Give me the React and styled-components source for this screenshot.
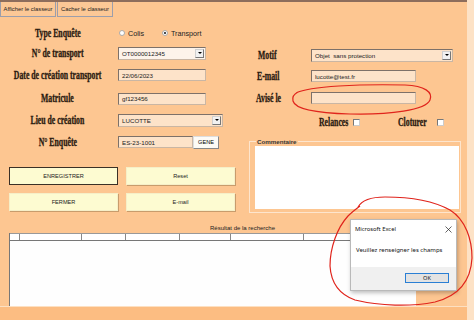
import React from 'react';
import styled, { createGlobalStyle } from 'styled-components';

const Global = createGlobalStyle`
  html, body { margin: 0; padding: 0; background: #fdc691; }
  * { box-sizing: border-box; }
`;

const Page = styled.div`
  position: relative;
  width: 474px;
  height: 320px;
  display: flex;
  overflow: hidden;
  font-family: "Liberation Sans", Arial, sans-serif;
`;

const Main = styled.div`
  width: 467px;
  display: flex;
  flex-direction: column;
  background: #fdc691;
`;

const Stripe = styled.div`
  flex: 1;
  background: #fde2c6;
`;

const TopBar = styled.div`
  height: 17px;
  border-top: 2px solid #8d6d5c;
  display: flex;
`;

const TabButton = styled.div`
  width: ${p => p.w}px;
  height: 15px;
  border: 1px solid #9c9eab;
  border-top: none;
  margin-right: 1px;
  background: #fcc896;
  font-size: 5.8px;
  color: #222;
  display: flex;
  align-items: center;
  justify-content: center;
  white-space: nowrap;
`;

const Body = styled.div`
  display: grid;
  grid-template-columns: 249px 218px;
  height: 195px;
`;

const LeftCol = styled.div`
  padding-top: 6px;
  display: flex;
  flex-direction: column;
`;

const RightCol = styled.div`
  padding-top: 27px;
  display: flex;
  flex-direction: column;
`;

const Row = styled.div`
  height: ${p => p.h}px;
  display: flex;
  align-items: center;
`;

const LabelCell = styled.div`
  width: ${p => p.w}px;
  margin-left: ${p => p.ml || 0}px;
  display: flex;
  justify-content: ${p => (p.left ? 'flex-start' : 'center')};
  flex-shrink: 0;
`;

const Label = styled.span`
  display: inline-block;
  font-family: "Liberation Serif", "Times New Roman", serif;
  font-weight: bold;
  font-size: 12.5px;
  color: #2a1a10;
  -webkit-text-stroke: 0.35px #2a1a10;
  white-space: nowrap;
  transform: scaleX(0.62);
  transform-origin: ${p => (p.left ? 'left center' : 'center')};
  margin-left: ${p => p.ml || 0}px;
`;

const FieldArea = styled.div`
  margin-left: 3px;
  display: flex;
  align-items: center;
  gap: ${p => p.gap || 0}px;
`;

const TextBox = styled.div`
  width: ${p => p.w}px;
  height: ${p => p.h || 12}px;
  background: ${p => p.bg || '#fde3c9'};
  border: 1px solid #c9b6a4;
  border-top-color: #7d7169;
  border-left-color: #7d7169;
  font-size: 6.2px;
  color: #222;
  display: flex;
  align-items: center;
  padding-left: 3px;
  white-space: nowrap;
`;

const SelectBox = styled(TextBox)`
  justify-content: space-between;
  padding-right: 1px;
`;

const DropBtn = styled.div`
  width: 9px;
  height: 9px;
  background: #f1f1f1;
  border: 1px solid #d0d0d0;
  border-right-color: #777;
  border-bottom-color: #777;
  display: flex;
  align-items: center;
  justify-content: center;
  &::after {
    content: '';
    border-left: 2px solid transparent;
    border-right: 2px solid transparent;
    border-top: 2.5px solid #000;
  }
`;

const SmallButton = styled.div`
  width: 26px;
  height: 13px;
  background: #fdfbf6;
  border: 1px solid #ddd;
  border-right-color: #888;
  border-bottom-color: #888;
  font-size: 5.6px;
  display: flex;
  align-items: center;
  justify-content: center;
`;

const RadioGroup = styled.div`
  display: flex;
  align-items: center;
  margin-left: 4px;
  gap: 18px;
`;

const RadioItem = styled.div`
  display: flex;
  align-items: center;
  gap: 3px;
  font-size: 7.2px;
  color: #222;
`;

const RadioDot = styled.span`
  width: 6px;
  height: 6px;
  border-radius: 50%;
  background: #fff;
  border: 1px solid #aaa;
  display: flex;
  align-items: center;
  justify-content: center;
  &::after {
    content: '';
    width: 2px;
    height: 2px;
    border-radius: 50%;
    background: ${p => (p.on ? '#111' : 'transparent')};
  }
`;

const CheckRow = styled.div`
  height: 24px;
  display: flex;
  align-items: center;
  padding-left: 70px;
`;

const CheckItem = styled.div`
  display: flex;
  align-items: center;
  width: ${p => p.w}px;
`;

const CheckBox = styled.span`
  width: 7px;
  height: 7px;
  background: #fff;
  border: 1px solid #ccc;
  border-top-color: #777;
  border-left-color: #777;
  margin-left: ${p => p.ml}px;
`;

const GroupBox = styled.fieldset`
  margin: 4px 0 0 0;
  padding: 1px 1px 2px 5px;
  width: 212px;
  height: 75px;
  border: 1px solid #fde5cd;
  & > legend {
    font-family: "Liberation Sans", Arial, sans-serif;
    font-weight: bold;
    font-size: 6.2px;
    color: #333;
    padding: 0 1px;
    margin-left: 1px;
  }
`;

const TextArea = styled.div`
  height: 63px;
  background: #fff;
`;

const ButtonGrid = styled.div`
  margin: 13px 0 0 9px;
  display: grid;
  grid-template-columns: 109px 109px;
  grid-auto-rows: 18px;
  column-gap: 8px;
  row-gap: 8px;
`;

const ActionButton = styled.div`
  background: #fdfbd1;
  border: 1px solid ${p => (p.focus ? '#3b3026' : '#f6efc8')};
  box-shadow: ${p => (p.focus ? 'none' : '1px 1px 0 #c89c6c')};
  font-size: 5.6px;
  color: #222;
  display: flex;
  align-items: center;
  justify-content: center;
`;

const Caption = styled.div`
  margin-top: 12px;
  height: 9px;
  padding-left: 18px;
  text-align: center;
  font-size: 6px;
  color: #222;
  line-height: 9px;
`;

const ResultTable = styled.div`
  margin-left: 9px;
  width: 407px;
  height: 73px;
  background: #fefefe;
  border-left: 1px solid #777;
  display: flex;
  flex-direction: column;
`;

const HeaderRow = styled.div`
  display: flex;
  height: 8px;
  border-top: 1px solid #999;
  border-bottom: 1px solid #777;
`;

const HeaderCell = styled.div`
  width: ${p => p.w}px;
  border-right: 1px solid #888;
  background: #fff;
`;

const Footer = styled.div`
  flex: 1;
  border-top: 1px solid #fde0c2;
  background: #fcbd82;
`;

const MsgBox = styled.div`
  position: absolute;
  left: 350px;
  top: 219px;
  width: 107px;
  height: 72px;
  background: #fff;
  border: 1px solid #b9b9b9;
  box-shadow: 1px 2px 4px rgba(0, 0, 0, 0.25);
  display: flex;
  flex-direction: column;
  font-family: "Noto Sans", "Open Sans", sans-serif;
  color: #111;
`;

const MsgTitle = styled.div`
  height: 18px;
  display: flex;
  align-items: center;
  justify-content: space-between;
  padding: 0 4px 0 4px;
  font-size: 5.8px;
`;

const MsgText = styled.div`
  flex: 1;
  font-size: 6px;
  padding: 8px 0 0 5px;
`;

const MsgFooter = styled.div`
  height: 23px;
  background: #f0f0f0;
  display: flex;
  justify-content: flex-end;
  align-items: flex-start;
  padding: 6px 7px 0 0;
`;

const OkButton = styled.div`
  width: 44px;
  height: 10px;
  border: 1px solid #2a7fd4;
  background: #e3e3e3;
  font-size: 5.6px;
  display: flex;
  align-items: center;
  justify-content: center;
`;

const Scribble = styled.svg`
  position: absolute;
  left: 0;
  top: 0;
  pointer-events: none;
`;

const leftCols = [10, 62, 44, 54, 51, 73, 47, 65];

export default function App() {
  return (
    <>
      <Global />
      <Page>
        <Main>
          <TopBar>
            <TabButton w={56}>Afficher le classeur</TabButton>
            <TabButton w={56}>Cacher le classeur</TabButton>
          </TopBar>
          <Body>
            <LeftCol>
              <Row h={20}>
                <LabelCell w={115}><Label>Type Enquête</Label></LabelCell>
                <RadioGroup>
                  <RadioItem><RadioDot />Colis</RadioItem>
                  <RadioItem><RadioDot on />Transport</RadioItem>
                </RadioGroup>
              </Row>
              <Row h={20}>
                <LabelCell w={115}><Label>N° de transport</Label></LabelCell>
                <FieldArea>
                  <SelectBox w={88} h={13} bg="#fdf3ea">OT0000012345<DropBtn /></SelectBox>
                </FieldArea>
              </Row>
              <Row h={24}>
                <LabelCell w={115}><Label>Date de création transport</Label></LabelCell>
                <FieldArea><TextBox w={88}>22/06/2023</TextBox></FieldArea>
              </Row>
              <Row h={23}>
                <LabelCell w={115}><Label>Matricule</Label></LabelCell>
                <FieldArea><TextBox w={88}>gf123456</TextBox></FieldArea>
              </Row>
              <Row h={20}>
                <LabelCell w={115}><Label>Lieu de création</Label></LabelCell>
                <FieldArea>
                  <SelectBox w={105} h={13}>LUCOTTE<DropBtn /></SelectBox>
                </FieldArea>
              </Row>
              <Row h={24}>
                <LabelCell w={115}><Label>N° Enquête</Label></LabelCell>
                <FieldArea>
                  <TextBox w={75}>ES-23-1001</TextBox>
                  <SmallButton>GENE</SmallButton>
                </FieldArea>
              </Row>
              <ButtonGrid>
                <ActionButton focus>ENREGISTRER</ActionButton>
                <ActionButton>Reset</ActionButton>
                <ActionButton>FERMER</ActionButton>
                <ActionButton>E-mail</ActionButton>
              </ButtonGrid>
            </LeftCol>
            <RightCol>
              <Row h={22}>
                <LabelCell w={55} ml={7} left><Label left ml={2}>Motif</Label></LabelCell>
                <SelectBox w={142} h={13}>Objet&nbsp;&nbsp;sans protection<DropBtn /></SelectBox>
              </Row>
              <Row h={20}>
                <LabelCell w={55} ml={7} left><Label left ml={1}>E-mail</Label></LabelCell>
                <TextBox w={105}>lucotte@test.fr</TextBox>
              </Row>
              <Row h={24}>
                <LabelCell w={55} ml={7} left><Label left>Avisé le</Label></LabelCell>
                <TextBox w={105} />
              </Row>
              <CheckRow>
                <CheckItem w={79}><Label left>Relances</Label><CheckBox ml={-13} /></CheckItem>
                <CheckItem w={60}><Label left>Cloturer</Label><CheckBox ml={-7} /></CheckItem>
              </CheckRow>
              <GroupBox>
                <legend>Commentaire</legend>
                <TextArea />
              </GroupBox>
            </RightCol>
          </Body>
          <Caption>Résultat de la recherche</Caption>
          <ResultTable>
            <HeaderRow>
              {leftCols.map((w, i) => <HeaderCell key={i} w={w} />)}
            </HeaderRow>
          </ResultTable>
          <Footer />
        </Main>
        <Stripe />
        <MsgBox>
          <MsgTitle>
            <span>Microsoft Excel</span>
            <svg width="7" height="7" viewBox="0 0 7 7">
              <path d="M0.5 0.5 L6.5 6.5 M6.5 0.5 L0.5 6.5" stroke="#222" strokeWidth="0.7" />
            </svg>
          </MsgTitle>
          <MsgText>Veuillez renseigner les champs</MsgText>
          <MsgFooter><OkButton>OK</OkButton></MsgFooter>
        </MsgBox>
        <Scribble width="474" height="320" viewBox="0 0 474 320">
          <path
            d="M296 93 C310 86, 360 84, 405 85 C425 86, 433 92, 430 100 C426 110, 390 115, 350 114 C315 113, 295 109, 293 101 C292 97, 294 94, 298 92"
            fill="none" stroke="#e0241c" strokeWidth="1.2"
          />
          <path
            d="M358 207 C362 200, 372 197, 385 197 C405 197, 430 199, 450 210 C466 220, 472 240, 472 258 C471 278, 462 295, 435 302 C410 307, 380 306, 355 300 C338 294, 331 282, 330 266 C330 248, 337 228, 348 216 C352 212, 356 209, 360 206"
            fill="none" stroke="#e0241c" strokeWidth="1.2"
          />
        </Scribble>
      </Page>
    </>
  );
}
